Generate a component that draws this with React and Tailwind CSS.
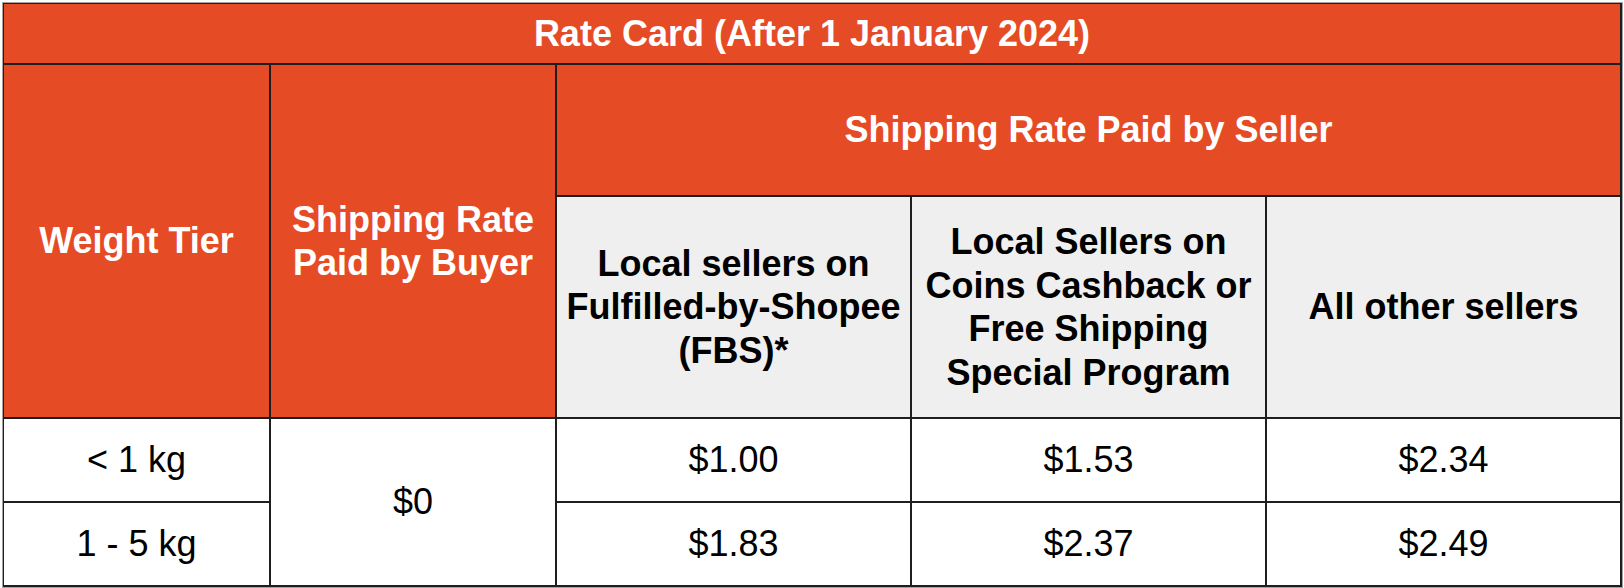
const orange = "bg-[#e54b25] text-white font-bold";
const gray = "bg-[#efefef] text-black font-bold";
const plain = "bg-white text-black font-normal";

function Cell({ className = "", children }) {
  return (
    <div
      className={`flex items-center justify-center text-center px-2 border-r-2 border-b-2 border-[#1e1e1e] ${className}`}
    >
      <div>{children}</div>
    </div>
  );
}

export default function App() {
  return (
    <div className="w-[1624px] h-[588px] bg-white pt-[2px] pl-[2px]">
      <div
        className="inline-block border border-[#a3a3a3] text-[36px] leading-[43.5px]"
        style={{ fontFamily: '"Liberation Sans", Arial, sans-serif' }}
      >
        <div className="grid grid-cols-[267px_286px_355px_355px_355px] grid-rows-[61px_132px_222px_84px_84px] border-l border-t border-[#1e1e1e]">
          {/* title */}
          <Cell className={`${orange} col-span-5`}>Rate Card (After 1 January 2024)</Cell>

          {/* header */}
          <Cell className={`${orange} row-span-2`}>Weight Tier</Cell>
          <Cell className={`${orange} row-span-2`}>
            Shipping Rate
            <br />
            Paid by Buyer
          </Cell>
          <Cell className={`${orange} col-span-3`}>Shipping Rate Paid by Seller</Cell>
          <Cell className={gray}>
            Local sellers on
            <br />
            Fulfilled-by-Shopee
            <br />
            (FBS)*
          </Cell>
          <Cell className={gray}>
            Local Sellers on
            <br />
            Coins Cashback or
            <br />
            Free Shipping
            <br />
            Special Program
          </Cell>
          <Cell className={gray}>All other sellers</Cell>

          {/* rows */}
          <Cell className={plain}>&lt; 1 kg</Cell>
          <Cell className={`${plain} row-span-2`}>$0</Cell>
          <Cell className={plain}>$1.00</Cell>
          <Cell className={plain}>$1.53</Cell>
          <Cell className={plain}>$2.34</Cell>
          <Cell className={plain}>1 - 5 kg</Cell>
          <Cell className={plain}>$1.83</Cell>
          <Cell className={plain}>$2.37</Cell>
          <Cell className={plain}>$2.49</Cell>
        </div>
      </div>
    </div>
  );
}
